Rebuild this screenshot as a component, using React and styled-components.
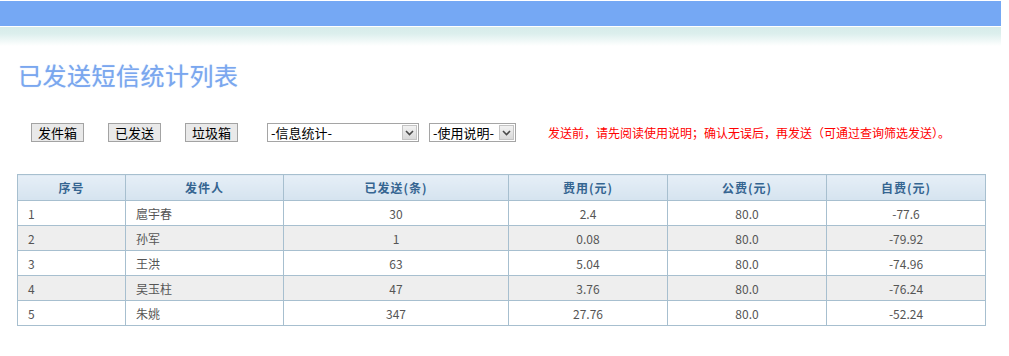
import styled, { createGlobalStyle } from 'styled-components';

const GlobalStyle = createGlobalStyle`
  body {
    margin: 0;
    background: #fff;
    font-family: "Noto Sans CJK SC", "Liberation Sans", sans-serif;
  }
`;

const rows = [
  { id: 1, name: '扈宇春', sent: '30', cost: '2.4', pub: '80.0', own: '-77.6' },
  { id: 2, name: '孙军', sent: '1', cost: '0.08', pub: '80.0', own: '-79.92' },
  { id: 3, name: '王洪', sent: '63', cost: '5.04', pub: '80.0', own: '-74.96' },
  { id: 4, name: '吴玉柱', sent: '47', cost: '3.76', pub: '80.0', own: '-76.24' },
  { id: 5, name: '朱姚', sent: '347', cost: '27.76', pub: '80.0', own: '-52.24' },
];

const columns = [
  { title: '序号', width: 108 },
  { title: '发件人', width: 158 },
  { title: '已发送(条)', width: 225 },
  { title: '费用(元)', width: 159 },
  { title: '公费(元)', width: 159 },
  { title: '自费(元)', width: 159 },
];

const Chevron = () => (
  <svg width='9' height='6' viewBox='0 0 9 6'>
    <path d='M1 1 L4.5 4.5 L8 1' fill='none' stroke='#4a4a4a' strokeWidth='1.6' />
  </svg>
);

const Select = ({ label, width }) => (
  <SelectBox $width={width}>
    <SelectValue>{label}</SelectValue>
    <SelectArrow>
      <Chevron />
    </SelectArrow>
  </SelectBox>
);

const App = () => {
  return (
    <>
      <GlobalStyle />
      <Header>
        <HeaderBar />
        <HeaderFade />
      </Header>
      <Page>
        <Title>已发送短信统计列表</Title>
        <Toolbar>
          <ButtonGroup>
            <Button type='button'>发件箱</Button>
            <Button type='button'>已发送</Button>
            <Button type='button'>垃圾箱</Button>
          </ButtonGroup>
          <Select label='-信息统计-' width={152} />
          <Select label='-使用说明-' width={87} />
          <Notice>发送前，请先阅读使用说明；确认无误后，再发送（可通过查询筛选发送）。</Notice>
        </Toolbar>
        <Table>
          <colgroup>
            {columns.map(col => <col key={col.title} style={{ width: col.width }} />)}
          </colgroup>
          <thead>
            <tr>
              {columns.map(col => <Th key={col.title}>{col.title}</Th>)}
            </tr>
          </thead>
          <tbody>
            {rows.map((row, i) => (
              <Tr key={row.id} $alt={i % 2 === 1}>
                <Td $left>{row.id}</Td>
                <Td $left>{row.name}</Td>
                <Td>{row.sent}</Td>
                <Td>{row.cost}</Td>
                <Td>{row.pub}</Td>
                <Td>{row.own}</Td>
              </Tr>
            ))}
          </tbody>
        </Table>
      </Page>
    </>
  );
};

const Header = styled.header`
  width: 1001px;
  padding-top: 1px;
`;

const HeaderBar = styled.div`
  height: 25px;
  background: #75a8f4;
  border-bottom: 1px solid #fff;
`;

const HeaderFade = styled.div`
  height: 19px;
  background: linear-gradient(to bottom, #d7ecea 0%, #dcefed 35%, #ffffff 100%);
`;

const Page = styled.main`
  padding: 17px 0 0 17px;
`;

const Title = styled.h1`
  margin: 0 0 0 1px;
  font-size: 24px;
  line-height: 24px;
  font-weight: normal;
  letter-spacing: 0.5px;
  color: #7aa7ef;
  text-shadow: 0 0 1px rgba(122, 167, 239, 0.6);
`;

const Toolbar = styled.div`
  display: flex;
  align-items: center;
  margin-top: 36px;
  padding-left: 14px;
  height: 19px;
`;

const ButtonGroup = styled.div`
  display: flex;
  gap: 24px;
  margin-right: 29px;
`;

const Button = styled.button`
  width: 53px;
  height: 19px;
  padding: 0;
  border: 1px solid #a3a3a3;
  background: #e9e9e9;
  font-family: "Noto Sans CJK SC", sans-serif;
  font-size: 13px;
  line-height: 17px;
  color: #000;
`;

const SelectBox = styled.div`
  display: flex;
  box-sizing: border-box;
  width: ${p => p.$width}px;
  height: 19px;
  margin-right: 10px;
  border: 1px solid #a5a5a5;
  background: #fff;
  padding: 1px;
`;

const SelectValue = styled.div`
  flex: 1;
  font-size: 13px;
  line-height: 15px;
  padding-left: 2px;
  color: #000;
  white-space: nowrap;
`;

const SelectArrow = styled.div`
  display: flex;
  align-items: center;
  justify-content: center;
  width: 15px;
  box-sizing: border-box;
  border: 1px solid #c4c4c4;
  background: linear-gradient(to bottom, #f2f2f2, #d9d9d9);
`;

const Notice = styled.span`
  margin-left: 22px;
  font-size: 12px;
  color: #ff0000;
  white-space: nowrap;
`;

const Table = styled.table`
  margin-top: 32px;
  width: 969px;
  border-collapse: collapse;
  table-layout: fixed;
  font-size: 12px;
`;

const Th = styled.th`
  height: 25px;
  padding: 0;
  border: 1px solid #a7bfcf;
  background: linear-gradient(to bottom, #e6eff7, #d5e3ef);
  color: #356591;
  font-weight: bold;
  letter-spacing: 1px;
  text-align: center;
`;

const Tr = styled.tr`
  background: ${p => (p.$alt ? '#eeeeee' : '#ffffff')};
`;

const Td = styled.td`
  height: 24px;
  padding: 0 0 0 ${p => (p.$left ? '10px' : '0')};
  border: 1px solid #a7bfcf;
  color: #555;
  text-align: ${p => (p.$left ? 'left' : 'center')};
`;

export default App;
